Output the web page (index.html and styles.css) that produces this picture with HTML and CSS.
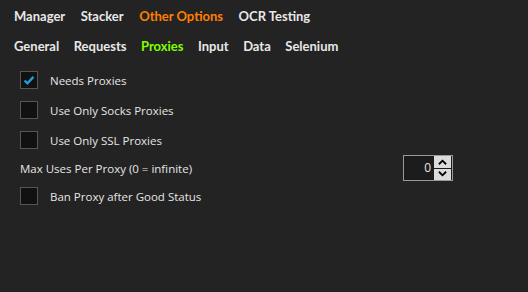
FILE: index.html
```html
<!DOCTYPE html>
<html lang="en">
<head>
    <meta charset="UTF-8">
    <title>Other Options - Proxies</title>
    <link rel="stylesheet" href="styles.css">
</head>
<body>
    <div class="tabs main-tabs">
        <span class="tab">Manager</span>
        <span class="tab">Stacker</span>
        <span class="tab active-main">Other Options</span>
        <span class="tab">OCR Testing</span>
    </div>
    <div class="tabs sub-tabs">
        <span class="tab">General</span>
        <span class="tab">Requests</span>
        <span class="tab active-sub">Proxies</span>
        <span class="tab">Input</span>
        <span class="tab">Data</span>
        <span class="tab">Selenium</span>
    </div>

    <div class="options">
        <label class="check-row">
            <span class="box checked">
                <svg viewBox="0 0 18 18"><path d="M4 9.5l3.2 3.2L14 5.5" fill="none" stroke="#1ba1e2" stroke-width="2.6"/></svg>
            </span>
            Needs Proxies
        </label>
        <label class="check-row">
            <span class="box"></span>
            Use Only Socks Proxies
        </label>
        <label class="check-row">
            <span class="box"></span>
            Use Only SSL Proxies
        </label>
        <div class="num-row">
            <span>Max Uses Per Proxy (0 = infinite)</span>
            <div class="spinner">
                <div class="spin-value">0</div>
                <div class="spin-buttons">
                    <div class="spin-btn"><svg viewBox="0 0 10 6"><path d="M1 5.5L5 1.5L9 5.5" fill="none" stroke="#000" stroke-width="2"/></svg></div>
                    <div class="spin-btn"><svg viewBox="0 0 10 6"><path d="M1 0.5L5 4.5L9 0.5" fill="none" stroke="#000" stroke-width="2"/></svg></div>
                </div>
            </div>
        </div>
        <label class="check-row">
            <span class="box"></span>
            Ban Proxy after Good Status
        </label>
    </div>
</body>
</html>
```

FILE: styles.css
```css
body {
    margin: 0;
    background-color: #232323;
    color: #e6e6e6;
    font-family: "Open Sans", "Noto Sans", sans-serif;
    font-size: 11.5px;
    width: 528px;
    height: 292px;
    overflow: hidden;
}

.tabs {
    display: flex;
    font-family: Lato, "DejaVu Sans", sans-serif;
    font-weight: bold;
    font-size: 13px;
    color: #e8e8e8;
    padding-left: 14px;
}

.main-tabs {
    padding-top: 8px;
    height: 18px;
    gap: 15.5px;
}

.sub-tabs {
    padding-top: 12px;
    height: 18px;
    gap: 14.5px;
}

.active-main {
    color: #ff7f00;
}

.active-sub {
    color: #7fff00;
}

.options {
    padding: 15px 0 0 20px;
}

.check-row {
    display: flex;
    align-items: center;
    height: 18px;
    margin-bottom: 12px;
}

.box {
    box-sizing: border-box;
    width: 18px;
    height: 18px;
    border: 1px solid #555555;
    background-color: #111111;
    margin-right: 12px;
    display: flex;
}

.box svg {
    width: 16px;
    height: 16px;
}

.num-row {
    display: flex;
    align-items: center;
    justify-content: space-between;
    width: 433px;
    height: 26px;
    margin-top: -6px;
    margin-bottom: 6px;
}

.spinner {
    display: flex;
    box-sizing: border-box;
    width: 50px;
    height: 26px;
    border: 1px solid #9a9a9a;
    background-color: #1c1c1c;
}

.spin-value {
    flex: 1;
    text-align: right;
    padding-right: 3px;
    line-height: 24px;
    font-size: 12px;
}

.spin-buttons {
    display: flex;
    flex-direction: column;
    gap: 1px;
    width: 17px;
    padding: 0 1px 0 0;
}

.spin-btn {
    flex: 1;
    background-color: #dcdcdc;
    display: flex;
    align-items: center;
    justify-content: center;
}

.spin-btn svg {
    width: 9px;
    height: 6px;
}
```
